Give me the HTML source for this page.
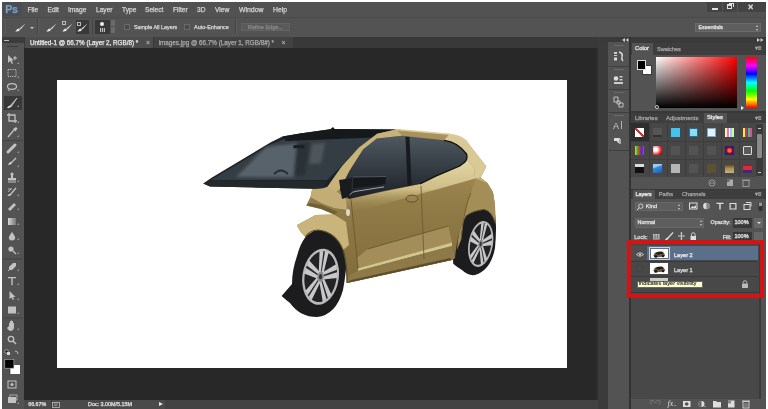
<!DOCTYPE html>
<html><head><meta charset="utf-8">
<style>
*{margin:0;padding:0;box-sizing:border-box}
html,body{width:768px;height:409px;overflow:hidden;background:#fff}
body{position:relative;filter:blur(0.5px);font-family:"Liberation Sans",sans-serif;color:#ddd}
.a{position:absolute}
#app{position:absolute;left:2px;top:2px;width:764px;height:407px;background:#535353}
.t{position:absolute;-webkit-text-stroke:0.25px;white-space:nowrap;line-height:1}
</style></head><body>
<div id="app"></div>
<!-- menu bar -->
<div class="a" style="left:2px;top:2px;width:764px;height:15px;background:#525252"></div>
<!-- options bar -->
<div class="a" style="left:2px;top:16.5px;width:764px;height:20.2px;background:#535353;border-top:1px solid #4a4a4a"></div>
<!-- tab bar -->
<div class="a" style="left:24px;top:37px;width:574px;height:11px;background:#393939"></div>
<div class="a" style="left:25px;top:37px;width:128px;height:11px;background:#4d4d4d"></div>
<div class="a" style="left:154px;top:37px;width:139px;height:11px;background:#424242"></div>
<!-- canvas -->
<div class="a" style="left:24px;top:48px;width:574px;height:352px;background:#282828"></div>
<div class="a" style="left:598px;top:37px;width:10px;height:372px;background:#3b3b3b"></div>
<div class="a" style="left:595px;top:48px;width:3px;height:352px;background:#2c2c2c"></div>
<!-- doc -->
<div class="a" style="left:57px;top:80px;width:510px;height:288px;background:#fff"></div>
<!-- CAR -->
<svg class="a" style="left:190px;top:115px" width="320" height="215" viewBox="190 115 320 215">
<defs>
 <filter id="soft" x="-20%" y="-20%" width="140%" height="140%"><feGaussianBlur stdDeviation="1.6"/></filter>
 <linearGradient id="body" x1="0" y1="0" x2="0" y2="1">
  <stop offset="0" stop-color="#ab955c"/><stop offset="0.5" stop-color="#917b47"/><stop offset="1" stop-color="#806c3c"/>
 </linearGradient>
 <linearGradient id="shoulder" x1="0" y1="0" x2="0" y2="1">
  <stop offset="0" stop-color="#e2d6a6"/><stop offset="0.55" stop-color="#cfbd86"/><stop offset="1" stop-color="#917b47" stop-opacity="0"/>
 </linearGradient>
 <linearGradient id="glass" x1="0" y1="0" x2="0" y2="1">
  <stop offset="0" stop-color="#505960"/><stop offset="0.5" stop-color="#353c43"/><stop offset="1" stop-color="#1d2126"/>
 </linearGradient>
</defs>
<!-- tires + wheel wells -->
<path d="M281.6 296 Q286 300 290 303 Q300 317 317 317 Q336 315 343 290 Q348 262 346 250 Q338 230 318 230 Q303 232 297 256 Q292 270 292 284 Z" fill="#1c1c1e"/>
<path d="M453.2 263.8 Q458 268 462 270 Q468 276 475 275 Q491 270 495 248 Q497 226 495 214 Q486 206 476 209 Q462 214 456 232 L453 258 Z" fill="#1c1c1e"/>
<!-- body base -->
<path d="M396 129.5 L449.4 134.3 Q463 136 468 143 L486.3 166.5 L480.7 177.5 L487.4 183 L492.9 191.9 L495 205 L495.5 224 Q492 211 484 209.5 Q472 211 466 216 Q458 228 455 258 L452 260 L347 283 Q347 262 343 250 Q336 232 318 230 Q308 231 305.4 237.3 L300.3 231.3 L296.8 225.3 L315.6 215 L334 214.5 L321 209 L306.2 205.6 L310.5 197 L312.2 188.5 L324 188 L327.8 186.6 L341.5 167 L359 147.4 L377 133.7 Z" fill="url(#body)"/>
<!-- shoulder highlight -->
<path d="M346 199 L349 199 L420 184 L435.7 176.2 L459.7 166 L467.4 160 L474 167.7 L475.2 178.6 L440 188.5 L420 194 L352 213 L347 210 Z" fill="url(#shoulder)"/>
<!-- rear pillar -->
<path d="M444 140.3 L449.4 134.3 Q463 136 468 143 L486.3 166.5 L480.7 177.5 L475.2 178.6 L474 167.7 L467.4 160 L466.5 154 L456 145.4 Z" fill="#d9c994"/>
<path d="M480.7 177.5 L487.4 183 L492.9 191.9 L495 205 L490 204 L484 188 L475.2 178.6 Z" fill="#c3ae76"/>
<!-- rear fender bulge -->
<path d="M470.8 193 Q464 205 461 240 L457 250 Q458 228 466 216 Q472 211 484 209.5 Q492 211 495.5 224 L495 205 L492.9 191.9 L487.4 183 L475.2 178.6 Z" fill="#a38e58"/>
<path d="M470.8 193 Q464.2 207.3 461 240" stroke="#6f5d34" stroke-width="1" fill="none"/>
<!-- front fender -->
<path d="M296.8 225.3 L315.6 215 L334 214.5 L346 222 L349 245 L343 250 Q336 232 318 230 Q308 231 305.4 237.3 L300.3 231.3 Z" fill="#c9b47c"/>
<path d="M306.2 205.6 L321 209 L334 214.5 L338 212 L322 205 L310 203 Z" fill="#5e4f2c" opacity="0.6"/>
<path d="M312.2 188.5 L324 188 L327.8 186.6 L335 190 L346 199 L347 210 L334 208 L321 203 L310.5 197 Z" fill="#c2ad76"/>
<!-- lower door shading -->
<path d="M367.5 249 L448.3 226 L452 242.5 L358.3 268.2 L357 258 Z" fill="#a38e5a"/>
<path d="M367.5 249 L448.3 226" stroke="#6e5c34" stroke-width="1" fill="none"/>
<path d="M358.3 268.2 L452 242.5 L452 246 L358 271 Z" fill="#d4c48e"/>
<path d="M358 271 L452 246 L455 258 L452 260 L347 283 L350 275 Z" fill="#8e7a48"/>
<path d="M351 280 L450 258 L452 260 L347 283 Z" fill="#5e4d2c"/>
<!-- arch edges -->
<path d="M305.4 237.3 Q308 231 318 230 Q336 232 343 250 Q347 262 347 283" fill="none" stroke="#5a4a28" stroke-width="1.2"/>
<path d="M466 216 Q472 211 484 209.5 Q492 211 495.5 224" fill="none" stroke="#5a4a28" stroke-width="1"/>
<!-- door lines -->
<path d="M351 199.4 Q354 230 358 268" stroke="#6a5830" stroke-width="0.9" fill="none"/>
<path d="M421 186 L424 259" stroke="#6a5830" stroke-width="0.8" fill="none"/>
<!-- roof black + windshield -->
<path d="M203.2 183.5 L212 177.5 L271.3 141.9 L282.5 136.4 L300 133.6 L332 129 L396 129.5 L377 133.7 L359 147.4 L341.5 167 L327.8 186.6 L324 188 L315 188.8 L210 186.5 Z" fill="#1e2327"/>
<path d="M210 180.5 L271.5 144 L284.5 139 L374 137 L357 150 L339.5 168 L327 180 L216 180 Z" fill="#353d44"/>
<g filter="url(#soft)">
<path d="M236 177 L266 147 L298 143 L294 177 Z" fill="#59626a"/>
<path d="M296.8 143 L310 142 L305 176 L293.6 176 Z" fill="#2a3035"/>
<path d="M312 144 L325 143 L321 163 L309 164 Z" fill="#4d565d"/>
</g>
<path d="M293.6 145 L304.7 145 L304 148.3 L293 148.3 Z" fill="#1c2024"/>
<path d="M274 174 q7 -7 14 0" stroke="#262c31" stroke-width="1.8" fill="none"/>
<path d="M203.2 183.5 L212 180.5 L327 181 L324 188 L315 188.8 L210 186.5 Z" fill="#23282d"/>
<path d="M282.5 136.4 L300 133.6 L332 129 L396 129.5 L377 133.7 L374 137.5 L286 141 Z" fill="#15191c"/>
<!-- A pillar highlight -->
<path d="M396 129.5 L402.2 135.7 L376.8 138.6 L363 149.4 L349.4 170.9 L339.6 190 L335 192 L327.8 186.6 L341.5 167 L359 147.4 L377 133.7 Z" fill="#c7b27a"/>
<!-- side glass -->
<path d="M376.8 138.6 L402.2 135.7 L444 140.3 Q458 142 466.5 154 Q468 158 465 162 L459.7 166 L435.7 176.2 L420 184 L384 191 L349 199 L339.6 190 L349.4 170.9 L363 149.4 Z" fill="url(#glass)"/>
<path d="M405.5 136.8 L409.5 137 L411.5 185 L407.5 186 Z" fill="#181b1e"/>
<path d="M353 177 L386 176.5 L385.5 184 L375 186 L353 188 Z" fill="#16191c"/>
<path d="M353 177 L386 176.5" stroke="#5c6368" stroke-width="0.8"/>
<path d="M339 180 L352 178 L351 196 L342 199 Z" fill="#191c1f"/>
<path d="M349.5 195 Q352 191.5 356 191.3 L384 186.9" stroke="#a0a6ac" stroke-width="1" fill="none"/>
<path d="M465 162 L459.7 166 L435.7 176.2 L420 184" stroke="#111" stroke-width="1.3" fill="none"/>
<path d="M444 140.3 Q458 142 466.5 154 Q468 158 465 162" stroke="#111" stroke-width="1.3" fill="none"/>
<!-- roof rail -->
<path d="M396 129.5 L449.4 134.3 Q463 136 468 143" stroke="#dccc98" stroke-width="1.6" fill="none"/>
<path d="M330 129.5 l3 -2.5 l2 2.5z" fill="#111"/>
<!-- handle, indicator -->
<ellipse cx="412" cy="198.6" rx="6" ry="3.5" fill="#9a8450" stroke="#5c4c28" stroke-width="0.9"/>
<ellipse cx="348" cy="212.6" rx="2" ry="3.5" fill="#dcd8c8"/>
<!-- rims -->
<ellipse cx="320.6" cy="276.7" rx="18.2" ry="28.2" transform="rotate(8 320.6 276.7)" fill="#b9b9b9"/>
<ellipse cx="320.6" cy="276.7" rx="16" ry="25.5" transform="rotate(8 320.6 276.7)" fill="#232325"/>
<g transform="translate(320.6 276.7) rotate(8) scale(0.66 1.04)">
 <g id="sp"><path d="M-3.5 -3 L-7 -24.5 L7 -24.5 L3.5 -3 Z" fill="#c8c8c8"/><path d="M-0.7 -5 L-1.2 -24.5 L1.2 -24.5 L0.7 -5 Z" fill="#2a2a2c"/></g>
 <use href="#sp" transform="rotate(72)"/><use href="#sp" transform="rotate(144)"/><use href="#sp" transform="rotate(216)"/><use href="#sp" transform="rotate(288)"/>
 <circle r="5" fill="#8a8a8a"/><circle r="2.5" fill="#333"/>
</g>
<ellipse cx="480.7" cy="244" rx="12.2" ry="23.2" transform="rotate(10 480.7 244)" fill="#b9b9b9"/>
<ellipse cx="480.7" cy="244" rx="10.5" ry="21" transform="rotate(10 480.7 244)" fill="#232325"/>
<g transform="translate(480.7 244) rotate(10) scale(0.44 0.86)">
 <use href="#sp"/><use href="#sp" transform="rotate(72)"/><use href="#sp" transform="rotate(144)"/><use href="#sp" transform="rotate(216)"/><use href="#sp" transform="rotate(288)"/>
 <circle r="5" fill="#8a8a8a"/><circle r="2.5" fill="#333"/>
</g>
</svg>


<!-- left toolbar -->
<div class="a" style="left:2px;top:37px;width:22px;height:372px;background:#535353"></div>
<!-- status bar -->
<div class="a" style="left:24px;top:400px;width:141px;height:9px;background:#4a4a4a"></div>
<div class="a" style="left:165px;top:400px;width:433px;height:9px;background:#424242"></div>
<!-- right icon column -->
<div class="a" style="left:608px;top:37px;width:21px;height:372px;background:#535353"></div>
<div class="a" style="left:629px;top:37px;width:2px;height:372px;background:#333"></div>
<!-- panels -->
<div class="a" style="left:631px;top:37px;width:135px;height:372px;background:#4a4a4a"></div>

<!-- MENU -->
<div class="a" style="left:3px;top:2px;width:19px;height:14px;background:#4a4d52"></div>
<div class="t" style="left:5.3px;top:4.2px;font-size:10.5px;font-weight:bold;color:#7c9fc4;letter-spacing:-0.2px">Ps</div>
<div class="t" style="left:27.5px;top:7px;font-size:6.6px;color:#d4d4d4">File</div>
<div class="t" style="left:47.5px;top:7px;font-size:6.6px;color:#d4d4d4">Edit</div>
<div class="t" style="left:68px;top:7px;font-size:6.6px;color:#d4d4d4">Image</div>
<div class="t" style="left:96px;top:7px;font-size:6.6px;color:#d4d4d4">Layer</div>
<div class="t" style="left:122px;top:7px;font-size:6.6px;color:#d4d4d4">Type</div>
<div class="t" style="left:145px;top:7px;font-size:6.6px;color:#d4d4d4">Select</div>
<div class="t" style="left:173px;top:7px;font-size:6.6px;color:#d4d4d4">Filter</div>
<div class="t" style="left:197px;top:7px;font-size:6.6px;color:#d4d4d4">3D</div>
<div class="t" style="left:215px;top:7px;font-size:6.6px;color:#d4d4d4">View</div>
<div class="t" style="left:239px;top:7px;font-size:6.9px;color:#d4d4d4">Window</div>
<div class="t" style="left:273px;top:7px;font-size:6.8px;color:#d4d4d4">Help</div>
<!-- window buttons -->
<div class="a" style="left:706.6px;top:2px;width:59.4px;height:10px;background:#444"></div>
<div class="a" style="left:722px;top:2px;width:1px;height:10px;background:#555"></div>
<div class="a" style="left:737px;top:2px;width:1px;height:10px;background:#555"></div>
<div class="a" style="left:711.5px;top:8px;width:6px;height:1.7px;background:#e0e0e0"></div>
<div class="a" style="left:727px;top:4px;width:5px;height:5px;border:1px solid #e0e0e0;border-top-width:2px"></div>
<div class="a" style="left:729px;top:3px;width:5px;height:4px;border-top:1px solid #e0e0e0;border-right:1px solid #e0e0e0"></div>
<div class="t" style="left:748px;top:2.5px;font-size:9px;font-weight:bold;color:#e0e0e0">&#215;</div>

<!-- OPTIONS -->
<div class="a" style="left:5px;top:20px;width:1px;height:13px;border-left:1px dotted #666"></div>
<svg class="a" style="left:15px;top:23px" width="11" height="9" viewBox="0 0 11 9"><path d="M10.5 0.5 L4.5 5.5 L5.5 6.5 Z" fill="#e6e6e6"/><path d="M4 5.5 Q2 5.5 1.5 7 Q1 8.2 0 8.5 Q3.5 9 5 7 Z" fill="#e6e6e6"/></svg>
<div class="a" style="left:30px;top:27px;width:0;height:0;border-left:2px solid transparent;border-right:2px solid transparent;border-top:2px solid #ccc"></div>
<div class="a" style="left:37px;top:19px;width:1px;height:15px;background:#444"></div>
<div class="a" style="left:38px;top:19px;width:1px;height:15px;background:#5e5e5e"></div>
<svg class="a" style="left:46px;top:23px" width="11" height="9" viewBox="0 0 11 9"><path d="M10.5 0.5 L4.5 5.5 L5.5 6.5 Z" fill="#e6e6e6"/><path d="M4 5.5 Q2 5.5 1.5 7 Q1 8.2 0 8.5 Q3.5 9 5 7 Z" fill="#e6e6e6"/></svg><svg class="a" style="left:62px;top:23px" width="11" height="9" viewBox="0 0 11 9"><path d="M10.5 0.5 L4.5 5.5 L5.5 6.5 Z" fill="#e6e6e6"/><path d="M4 5.5 Q2 5.5 1.5 7 Q1 8.2 0 8.5 Q3.5 9 5 7 Z" fill="#e6e6e6"/></svg>
<div class="a" style="left:62px;top:21px;width:4px;height:4px;border:1px solid #bbb"></div>
<div class="a" style="left:76px;top:20px;width:13px;height:14px;background:#383838"></div>
<svg class="a" style="left:77px;top:23px" width="11" height="9" viewBox="0 0 11 9"><path d="M10.5 0.5 L4.5 5.5 L5.5 6.5 Z" fill="#e6e6e6"/><path d="M4 5.5 Q2 5.5 1.5 7 Q1 8.2 0 8.5 Q3.5 9 5 7 Z" fill="#e6e6e6"/></svg>
<div class="a" style="left:77px;top:22px;width:4px;height:4px;border:1px solid #bbb"></div>
<div class="a" style="left:92px;top:19px;width:1px;height:15px;background:#444"></div>
<div class="a" style="left:95px;top:20px;width:15px;height:14px;background:#383838"></div>
<div class="a" style="left:100px;top:22px;width:4px;height:4px;border-radius:50%;background:#f0f0f0"></div>
<div class="a" style="left:100px;top:28px;width:5px;height:4px;background:repeating-linear-gradient(90deg,#bbb 0 1px,#555 1px 2px)"></div>
<div class="a" style="left:111px;top:20px;width:4px;height:6px;background:#6a6a6a"></div>
<div class="a" style="left:111px;top:27px;width:4px;height:6px;background:#6a6a6a"></div>
<div class="a" style="left:124px;top:24px;width:6px;height:6px;background:#4a4a4a;border:1px solid #6a6a6a"></div>
<div class="t" style="left:134px;top:24.5px;font-size:5.4px;color:#d8d8d8">Sample All Layers</div>
<div class="a" style="left:184px;top:24px;width:6px;height:6px;background:#4a4a4a;border:1px solid #6a6a6a"></div>
<div class="t" style="left:194px;top:24.5px;font-size:5.5px;color:#d8d8d8">Auto-Enhance</div>
<div class="a" style="left:235px;top:19px;width:1px;height:15px;background:#444"></div>
<div class="a" style="left:236px;top:19px;width:1px;height:15px;background:#5e5e5e"></div>
<div class="a" style="left:241px;top:23px;width:49px;height:8px;background:#5a5a5a;border:1px solid #636363"></div>
<div class="t" style="left:248px;top:24.5px;font-size:5.5px;color:#8a8a8a">Refine Edge...</div>
<div class="a" style="left:695px;top:23px;width:66px;height:9px;background:#5e5e5e;border:1px solid #6a6a6a"></div>
<div class="t" style="left:698.5px;top:25px;font-size:5.4px;color:#e4e4e4">Essentials</div>
<div class="a" style="left:756px;top:25px;width:0;height:0;border-left:1.5px solid transparent;border-right:1.5px solid transparent;border-bottom:2px solid #ccc"></div>
<div class="a" style="left:756px;top:29px;width:0;height:0;border-left:1.5px solid transparent;border-right:1.5px solid transparent;border-top:2px solid #ccc"></div>

<!-- TABS -->
<div class="t" style="left:30px;top:39.5px;font-size:6.3px;color:#e8e8e8">Untitled-1 @ 66.7% (Layer 2, RGB/8) *</div>
<div class="t" style="left:146px;top:39px;font-size:7px;color:#aaa">&#215;</div>
<div class="t" style="left:158.7px;top:39.5px;font-size:6.3px;color:#a8a8a8">images.jpg @ 66.7% (Layer 1, RGB/8#) *</div>
<div class="t" style="left:281.5px;top:39px;font-size:7px;color:#aaa">&#215;</div>
<!-- toolbar header -->
<div class="a" style="left:2px;top:36.7px;width:22px;height:6.8px;background:#3c3c3c"></div>
<div class="a" style="left:4px;top:39.5px;width:5px;height:1.5px;background:#bbb"></div>
<div class="a" style="left:7px;top:46px;width:10.5px;height:1px;background:#3a3a3a"></div>
<!-- TOOLS -->
<svg class="a" style="left:0;top:0" width="26" height="409" viewBox="0 0 26 409"><path d="M8 55 L8 63 L10 61 L12 64 L13 63.5 L11.5 60.5 L14 60.5 Z" fill="#c2c2c2"/><path d="M13 58 h4 M15 56 v4" stroke="#c2c2c2" stroke-width="1"/><rect x="8" y="69.5" width="8" height="7" fill="none" stroke="#c2c2c2" stroke-width="1" stroke-dasharray="1.2 1"/><ellipse cx="12" cy="86.5" rx="4.5" ry="2.8" fill="none" stroke="#c2c2c2" stroke-width="1.2"/><path d="M8.5 88 q-1 2 1 3" stroke="#c2c2c2" fill="none" stroke-width="1"/><rect x="4" y="96" width="18" height="14" fill="#383838"/><path d="M17 98 L10 106 L11 107 Z" fill="#c2c2c2" stroke="#c2c2c2" stroke-width="0.8"/><path d="M10 105.5 q-2 0 -3 2.5 q2.5 0.5 4 -1 z" fill="#d8d8d8"/><path d="M9 113 v8 h8 M7 115 h8 v8" stroke="#c2c2c2" fill="none" stroke-width="1.3"/><path d="M8 137 L14 130" stroke="#c2c2c2" stroke-width="1.3"/><path d="M13 129 l3 -2 l1.5 1.5 l-2 3 z" fill="#c2c2c2"/><rect x="3" y="140" width="20" height="1" fill="#444"/><path d="M8 152 L15 145" stroke="#c2c2c2" stroke-width="3" stroke-linecap="round"/><path d="M16 158 L11 163" stroke="#c2c2c2" stroke-width="1.3"/><path d="M11 162 q-2 0 -3 3 q3 0 4 -2 z" fill="#d8d8d8"/><rect x="11" y="174" width="2" height="4" fill="#c2c2c2"/><circle cx="12" cy="174" r="1.6" fill="#c2c2c2"/><rect x="8" y="178" width="8" height="2.5" fill="#c2c2c2"/><rect x="8" y="181.5" width="8" height="1" fill="#c2c2c2"/><path d="M16 188 L10 195" stroke="#c2c2c2" stroke-width="1.3"/><path d="M8 189 h4 M8 192 l3 -3" stroke="#c2c2c2" stroke-width="0.9"/><path d="M10 194 q-2 0 -2.5 2 q2.5 0 3.5 -1 z" fill="#d8d8d8"/><path d="M8 209 L14 203 L16 205 L10 211 Z" fill="#c2c2c2"/><defs><linearGradient id="gt" x1="0" x2="1"><stop offset="0" stop-color="#d8d8d8"/><stop offset="1" stop-color="#777"/></linearGradient></defs><rect x="8" y="218" width="8" height="7" fill="url(#gt)"/><path d="M12 232 Q8 237 9 239 Q12 242 15 239 Q16 237 12 232 Z" fill="#c2c2c2"/><circle cx="11" cy="249" r="2.6" fill="#c2c2c2"/><path d="M13 251 L16 254" stroke="#c2c2c2" stroke-width="1.3"/><rect x="3" y="258.5" width="20" height="1" fill="#444"/><path d="M16 263 L13 263 L9 267 L9 270 L12 270 L16 266 Z" fill="#c2c2c2"/><path d="M9 270 L8 271" stroke="#c2c2c2"/><path d="M8 277 h8 v1.2 h-3.3 v7 h-1.4 v-7 h-3.3 z" fill="#c2c2c2"/><path d="M9.5 291 L9.5 299 L11.5 297.5 L13 300 L14 299.5 L13 297 L15.5 297 Z" fill="#c2c2c2"/><rect x="8" y="306.5" width="8" height="7" fill="#c2c2c2"/><rect x="3" y="317.5" width="20" height="1" fill="#444"/><path d="M9 326 v-3 h1 v2 v-4 h1 v4 v-4.5 h1 v4.5 v-4 h1 v4 v-2 h1 v4 q0 3 -3 4 h-1 q-2 -1 -3 -3 z" fill="#c2c2c2"/><circle cx="11" cy="339" r="2.7" fill="none" stroke="#c2c2c2" stroke-width="1.3"/><path d="M13 341 L16 344" stroke="#c2c2c2" stroke-width="1.5"/><rect x="5" y="350" width="3" height="3" fill="#111" stroke="#ccc" stroke-width="0.6"/><rect x="7" y="352" width="3" height="3" fill="#d8d8d8"/><path d="M15 351 q3 0 3 3" stroke="#c2c2c2" fill="none" stroke-width="0.9"/><rect x="10" y="364.7" width="10.3" height="9.7" fill="#fff" stroke="#2a2a2a" stroke-width="0.6"/><rect x="4.8" y="359.3" width="9.1" height="8.9" fill="#000" stroke="#bbb" stroke-width="0.6"/><rect x="8" y="381" width="8" height="7" fill="none" stroke="#c2c2c2" stroke-width="1"/><circle cx="12" cy="384.5" r="1.5" fill="#c2c2c2"/><rect x="8" y="397" width="8" height="6" fill="#c2c2c2"/><rect x="10" y="395" width="7" height="5" fill="none" stroke="#c2c2c2" stroke-width="0.8"/><path d="M17 64 l2 0 l0 -2 z" fill="#999"/><path d="M17 78 l2 0 l0 -2 z" fill="#999"/><path d="M17 91 l2 0 l0 -2 z" fill="#999"/><path d="M17 107 l2 0 l0 -2 z" fill="#999"/><path d="M17 123 l2 0 l0 -2 z" fill="#999"/><path d="M17 137 l2 0 l0 -2 z" fill="#999"/><path d="M17 153 l2 0 l0 -2 z" fill="#999"/><path d="M17 167 l2 0 l0 -2 z" fill="#999"/><path d="M17 182 l2 0 l0 -2 z" fill="#999"/><path d="M17 196 l2 0 l0 -2 z" fill="#999"/><path d="M17 210 l2 0 l0 -2 z" fill="#999"/><path d="M17 225 l2 0 l0 -2 z" fill="#999"/><path d="M17 240 l2 0 l0 -2 z" fill="#999"/><path d="M17 254 l2 0 l0 -2 z" fill="#999"/><path d="M17 271 l2 0 l0 -2 z" fill="#999"/><path d="M17 285 l2 0 l0 -2 z" fill="#999"/><path d="M17 300 l2 0 l0 -2 z" fill="#999"/><path d="M17 314 l2 0 l0 -2 z" fill="#999"/><path d="M17 330 l2 0 l0 -2 z" fill="#999"/><path d="M17 404 l2 0 l0 -2 z" fill="#999"/></svg>

<!-- RIGHT ICON COLUMN -->
<div class="a" style="left:599px;top:37px;width:30px;height:5px;background:#3a3a3a"></div>
<svg class="a" style="left:622px;top:38px" width="7" height="4" viewBox="0 0 7 4"><path d="M0 2 L3 0 V4Z M3.5 2 L6.5 0 V4Z" fill="#ccc"/></svg>
<div class="a" style="left:609px;top:44px;width:20px;height:23px;border-bottom:1px solid #3e3e3e"></div>
<div class="a" style="left:614px;top:45px;width:10px;height:1px;background:#6a6a6a"></div>
<div class="a" style="left:609px;top:68px;width:20px;height:22px;border-bottom:1px solid #3e3e3e"></div>
<div class="a" style="left:614px;top:69px;width:10px;height:1px;background:#6a6a6a"></div>
<div class="a" style="left:609px;top:91px;width:20px;height:22px;border-bottom:1px solid #3e3e3e"></div>
<div class="a" style="left:614px;top:92px;width:10px;height:1px;background:#6a6a6a"></div>
<div class="a" style="left:609px;top:114px;width:20px;height:37px;border-bottom:1px solid #3e3e3e"></div>
<div class="a" style="left:614px;top:115px;width:10px;height:1px;background:#6a6a6a"></div>
<svg class="a" style="left:608px;top:44px" width="21" height="110" viewBox="608 44 21 110">
 <rect x="614" y="52" width="3" height="2" fill="#ccc"/><rect x="614" y="55" width="3" height="1" fill="#ccc"/><rect x="614" y="57.5" width="3" height="3" fill="#ddd"/>
 <path d="M619 52 q4 1 3 5 q-1 2 1 4" stroke="#ddd" stroke-width="1.5" fill="none"/>
 <circle cx="616" cy="78.5" r="2.3" fill="#ddd"/><rect x="619.5" y="76" width="3" height="1.5" fill="#ccc"/><rect x="619.5" y="79" width="3" height="1.5" fill="#ccc"/><rect x="614" y="82" width="9" height="2" fill="#ccc"/>
 <path d="M614 97 h4 v5 h-4 z M617 101 h3 v3 h-3 z M619 103 h4 v4 h-4z" fill="none" stroke="#ccc" stroke-width="0.9"/>
 <text x="613" y="129" font-family="Liberation Sans" font-size="9" fill="#ccc">A</text><rect x="621" y="121" width="0.8" height="8" fill="#ccc"/>
 <path d="M614 138 h6 v5 h-2 l-1 -2 h-3 z" fill="#ddd"/><rect x="619" y="139" width="2" height="5" fill="#aaa"/>
</svg>
<!-- PANEL HEADER -->
<div class="a" style="left:631px;top:37px;width:135px;height:6px;background:#3a3a3a"></div>
<svg class="a" style="left:757px;top:38px" width="7" height="4" viewBox="0 0 7 4"><path d="M0 0 L3 2 L0 4Z M3.5 0 L6.5 2 L3.5 4Z" fill="#ccc"/></svg>
<!-- COLOR PANEL -->
<div class="a" style="left:631px;top:43px;width:135px;height:12px;background:#3e3e3e"></div>
<div class="a" style="left:632px;top:43px;width:21px;height:12px;background:#535353"></div>
<div class="a" style="left:631px;top:55px;width:135px;height:56px;background:#535353"></div>
<div class="t" style="left:635px;top:46.3px;font-size:5.9px;color:#f2f2f2">Color</div>
<div class="t" style="left:657px;top:46.5px;font-size:5.5px;color:#a6a6a6">Swatches</div>
<div class="t" style="left:755px;top:45px;font-size:6px;color:#aaa">&#9662;&#8801;</div>
<div class="a" style="left:641.9px;top:65.2px;width:10.5px;height:10px;background:#fff;border:1px solid #3a3a3a"></div>
<div class="a" style="left:637.4px;top:59.7px;width:9px;height:9.9px;background:#000;border:1px solid #ddd"></div>
<div class="a" style="left:656px;top:57px;width:81px;height:51px;background:linear-gradient(to bottom,rgba(0,0,0,0),#000),linear-gradient(to right,#fff,#f00)"></div>
<div class="a" style="left:655px;top:105px;width:4px;height:4px;border:1px solid #ccc;border-radius:50%"></div>
<div class="a" style="left:745.5px;top:57px;width:11px;height:51px;background:linear-gradient(to bottom,#f00 0%,#f0f 17%,#00f 33%,#0ff 50%,#0f0 67%,#ff0 83%,#f00 100%)"></div>
<div class="a" style="left:741px;top:106px;width:0;height:0;border-top:2px solid transparent;border-bottom:2px solid transparent;border-left:3px solid #eee"></div>

<!-- STYLES PANEL -->
<div class="a" style="left:631px;top:111px;width:135px;height:2px;background:#383838"></div>
<div class="a" style="left:631px;top:113px;width:135px;height:10px;background:#3e3e3e"></div>
<div class="a" style="left:703.5px;top:113px;width:23px;height:10px;background:#535353"></div>
<div class="t" style="left:635px;top:115.5px;font-size:5.9px;color:#a6a6a6">Libraries</div>
<div class="t" style="left:666px;top:115.5px;font-size:5.9px;color:#a6a6a6">Adjustments</div>
<div class="t" style="left:707px;top:115.3px;font-size:5.8px;color:#f2f2f2">Styles</div>
<div class="t" style="left:755px;top:114.5px;font-size:6px;color:#aaa">&#9662;&#8801;</div>
<div class="a" style="left:631px;top:123px;width:135px;height:66px;background:#535353"></div>
<div class="a" style="left:631px;top:123px;width:125px;height:54px;background:#474747"></div>
<div class="a" style="left:648.5px;top:123px;width:1px;height:54px;background:#3d3d3d"></div>
<div class="a" style="left:666.5px;top:123px;width:1px;height:54px;background:#3d3d3d"></div>
<div class="a" style="left:684.5px;top:123px;width:1px;height:54px;background:#3d3d3d"></div>
<div class="a" style="left:702.5px;top:123px;width:1px;height:54px;background:#3d3d3d"></div>
<div class="a" style="left:720.5px;top:123px;width:1px;height:54px;background:#3d3d3d"></div>
<div class="a" style="left:738.5px;top:123px;width:1px;height:54px;background:#3d3d3d"></div>
<div class="a" style="left:631px;top:141.3px;width:125px;height:1px;background:#3d3d3d"></div>
<div class="a" style="left:631px;top:159.3px;width:125px;height:1px;background:#3d3d3d"></div>
<div class="a" style="left:631px;top:123.3px;width:17.5px;height:18px;background:#2e2e2e"></div>
<div class="a" style="left:635.0px;top:127.80000000000001px;width:9px;height:9px;background:linear-gradient(45deg,#fff 0 43%,#c33 43% 57%,#fff 57%);"></div>
<div class="a" style="left:653.0px;top:127.80000000000001px;width:9px;height:9px;background:#555;border-bottom:2px solid #333;"></div>
<div class="a" style="left:671.0px;top:127.80000000000001px;width:9px;height:9px;background:#42c4ec;"></div>
<div class="a" style="left:689.0px;top:127.80000000000001px;width:9px;height:9px;background:#8adcf2;border:1px solid #2a6a9a;"></div>
<div class="a" style="left:707.0px;top:127.80000000000001px;width:9px;height:9px;background:#e4f4f8;border:1px solid #7ac;"></div>
<div class="a" style="left:725.0px;top:127.80000000000001px;width:9px;height:9px;background:linear-gradient(90deg,#ff9 0 20%,#f6c 20% 40%,#fff 40% 60%,#9cf 60% 80%,#cf9 80%);"></div>
<div class="a" style="left:743.0px;top:127.80000000000001px;width:9px;height:9px;background:linear-gradient(90deg,#ee4 0 20%,#d33 20% 40%,#44c 40% 60%,#3c6 60% 80%,#e4a 80%);"></div>
<div class="a" style="left:635.0px;top:145.7px;width:9px;height:9px;background:linear-gradient(90deg,#ec3,#3b3,#c33,#33c,#c3c);"></div>
<div class="a" style="left:653.0px;top:145.7px;width:9px;height:9px;background:radial-gradient(circle at 30% 40%,#fff 0 20%,#e33 60%,#600);"></div>
<div class="a" style="left:671.0px;top:145.7px;width:9px;height:9px;background:#535353;"></div>
<div class="a" style="left:689.0px;top:145.7px;width:9px;height:9px;background:#535353;"></div>
<div class="a" style="left:707.0px;top:145.7px;width:9px;height:9px;background:#535353;"></div>
<div class="a" style="left:725.0px;top:145.7px;width:9px;height:9px;background:radial-gradient(circle,#f63 0 25%,#a03 45%,#227 70%);"></div>
<div class="a" style="left:743.0px;top:145.7px;width:9px;height:9px;background:#5a5a5a;border:1.5px solid #ddd;border-radius:1px;"></div>
<div class="a" style="left:635.0px;top:163.6px;width:9px;height:9px;background:linear-gradient(to bottom,#ddd 0 30%,#111 30%);"></div>
<div class="a" style="left:653.0px;top:163.6px;width:9px;height:9px;background:linear-gradient(160deg,#9cf 0 30%,#3a8be0 40%,#1a5ab0);"></div>
<div class="a" style="left:671.0px;top:163.6px;width:9px;height:9px;background:#b5b5b5;"></div>
<div class="a" style="left:689.0px;top:163.6px;width:9px;height:9px;background:#535353;"></div>
<div class="a" style="left:707.0px;top:163.6px;width:9px;height:9px;background:#5b5232;"></div>
<div class="a" style="left:725.0px;top:163.6px;width:9px;height:9px;background:linear-gradient(to bottom,#4e3c1a,#a8905a 50%,#c8b280);"></div>
<div class="a" style="left:743.0px;top:163.6px;width:9px;height:9px;background:linear-gradient(to bottom,#7a2a3a 0 25%,#d03040 25% 70%,#3a2a7a 70%);"></div>

<div class="a" style="left:756px;top:124px;width:7px;height:52px;background:#3a3a3a"></div>
<div class="a" style="left:757px;top:134px;width:5px;height:24px;background:#8a8a8a;border-radius:1px"></div>
<div class="a" style="left:758px;top:128px;width:3px;height:1px;background:#ccc"></div>
<div class="a" style="left:758px;top:172px;width:3px;height:1px;background:#ccc"></div>
<svg class="a" style="left:705px;top:178px" width="50" height="10" viewBox="705 178 50 10">
 <circle cx="712" cy="183" r="3" fill="none" stroke="#999" stroke-width="1"/><path d="M710 183 h4" stroke="#999"/>
 <rect x="727" y="179.5" width="6" height="6.5" fill="#aaa"/><rect x="727" y="179.5" width="2.5" height="2.5" fill="#666"/>
 <rect x="743" y="180.5" width="6" height="6" fill="none" stroke="#999" stroke-width="1"/><rect x="742" y="179.5" width="8" height="1" fill="#999"/>
</svg>
<div class="a" style="left:631px;top:189px;width:135px;height:2px;background:#383838"></div>

<!-- LAYERS PANEL -->
<div class="a" style="left:631px;top:190px;width:135px;height:8.5px;background:#3e3e3e"></div>
<div class="a" style="left:632.8px;top:190px;width:22px;height:8.5px;background:#535353"></div>
<div class="t" style="left:635.5px;top:191.5px;font-size:5.4px;color:#f2f2f2">Layers</div>
<div class="t" style="left:658.8px;top:191.7px;font-size:5.6px;color:#a6a6a6">Paths</div>
<div class="t" style="left:682px;top:191.7px;font-size:5.6px;color:#a6a6a6">Channels</div>
<div class="t" style="left:755px;top:191px;font-size:6px;color:#aaa">&#9662;&#8801;</div>
<div class="a" style="left:631px;top:198.5px;width:135px;height:210.5px;background:#535353"></div>
<!-- filter row -->
<div class="a" style="left:634.8px;top:201.7px;width:48px;height:9.6px;background:#5e5e5e;border:1px solid #676767"></div>
<svg class="a" style="left:636px;top:203px" width="8" height="8" viewBox="0 0 8 8"><circle cx="4.8" cy="3.2" r="2.2" fill="none" stroke="#ddd" stroke-width="0.9"/><path d="M3.2 4.8 L1 7" stroke="#ddd" stroke-width="1"/></svg>
<div class="t" style="left:645.8px;top:203.8px;font-size:5.6px;color:#e6e6e6">Kind</div>
<div class="a" style="left:678px;top:203.5px;width:0;height:0;border-left:1.5px solid transparent;border-right:1.5px solid transparent;border-bottom:2px solid #ccc"></div>
<div class="a" style="left:678px;top:207.5px;width:0;height:0;border-left:1.5px solid transparent;border-right:1.5px solid transparent;border-top:2px solid #ccc"></div>
<svg class="a" style="left:686px;top:200px" width="80" height="14" viewBox="686 200 80 14">
 <rect x="689.5" y="203" width="7.5" height="6" fill="none" stroke="#ddd" stroke-width="1"/><path d="M690.5 208 l2 -2 l1.5 1 l2 -2 v3z" fill="#ddd"/>
 <circle cx="706.3" cy="206" r="3.2" fill="#ddd"/><path d="M706.3 202.8 a3.2 3.2 0 0 1 0 6.4z" fill="#888"/>
 <path d="M716.5 202.8 h7 v1.3 h-2.8 v5.5 h-1.4 v-5.5 h-2.8z" fill="#ddd"/>
 <path d="M729.5 203 h1.2 v6.5 h-1.2z M735.3 203 h1.2 v6.5 h-1.2z M729.5 203 h7 v1 h-7z M729.5 208.5 h7 v1 h-7z" fill="#ddd"/>
 <rect x="744" y="204.5" width="6" height="5" fill="none" stroke="#ddd" stroke-width="1"/><path d="M746 202.5 h5 v4" stroke="#ddd" fill="none" stroke-width="1"/>
 <rect x="758.5" y="202" width="4" height="9" rx="1" fill="#333"/><rect x="759" y="202.5" width="3" height="3.5" fill="#999"/>
</svg>
<!-- blend row -->
<div class="a" style="left:634.8px;top:218px;width:69.5px;height:9.7px;background:#5e5e5e;border:1px solid #676767"></div>
<div class="t" style="left:637.6px;top:220.3px;font-size:5.5px;color:#e6e6e6">Normal</div>
<div class="a" style="left:700px;top:220px;width:0;height:0;border-left:1.5px solid transparent;border-right:1.5px solid transparent;border-bottom:2px solid #ccc"></div>
<div class="a" style="left:700px;top:224px;width:0;height:0;border-left:1.5px solid transparent;border-right:1.5px solid transparent;border-top:2px solid #ccc"></div>
<div class="t" style="left:710.4px;top:220.3px;font-size:5.5px;color:#e0e0e0">Opacity:</div>
<div class="a" style="left:733px;top:218px;width:18.5px;height:9.7px;background:#383838"></div>
<div class="t" style="left:734.5px;top:220.3px;font-size:5.5px;color:#eee">100%</div>
<div class="a" style="left:753.5px;top:218px;width:9.5px;height:9.7px;background:#666"></div>
<div class="a" style="left:756.5px;top:222px;width:0;height:0;border-left:2px solid transparent;border-right:2px solid transparent;border-top:2px solid #ddd"></div>
<!-- lock row -->
<div class="t" style="left:634.2px;top:235.3px;font-size:5.6px;color:#e0e0e0">Lock:</div>
<svg class="a" style="left:650px;top:231px" width="50" height="10" viewBox="650 231 50 10">
 <rect x="653" y="234" width="6.5" height="5.5" fill="#ccc"/><path d="M653 236 h6.5 M653 238 h6.5 M655 234 v5.5 M657.5 234 v5.5" stroke="#666" stroke-width="0.7"/>
 <path d="M673 232.5 L668 238" stroke="#ddd" stroke-width="1.2"/><path d="M668 237.5 q-2 0 -3 2.5 q3 0 3.6 -1.5z" fill="#eee"/>
 <path d="M681.4 232.5 v7 M678 236 h7" stroke="#ccc" stroke-width="1"/><path d="M680 233.5 l1.4 -1.5 l1.4 1.5z M680 238.5 l1.4 1.5 l1.4 -1.5z" fill="#ccc"/>
 <rect x="690.5" y="236" width="5.5" height="4" fill="#ddd"/><path d="M691.5 236 v-1.5 a1.8 1.8 0 0 1 3.6 0 v1.5" stroke="#ddd" fill="none" stroke-width="0.9"/>
</svg>
<div class="t" style="left:722.7px;top:235.3px;font-size:5.6px;color:#e0e0e0">Fill:</div>
<div class="a" style="left:733px;top:232px;width:18.5px;height:9.7px;background:#383838"></div>
<div class="t" style="left:734.5px;top:234.3px;font-size:5.5px;color:#eee">100%</div>
<div class="a" style="left:753.5px;top:232px;width:9.5px;height:9.7px;background:#666"></div>
<!-- layer list -->
<div class="a" style="left:631px;top:244px;width:128px;height:156px;background:#484848"></div>
<div class="a" style="left:759px;top:244px;width:2px;height:156px;background:#3a3a3a"></div>
<div class="a" style="left:647px;top:246.4px;width:110.5px;height:14.1px;background:#5b6f8b"></div>
<div class="a" style="left:631px;top:246.4px;width:16px;height:14.1px;background:#4e4e4e"></div>
<div class="a" style="left:631px;top:260.5px;width:126.5px;height:1px;background:#3a3a3a"></div>
<div class="a" style="left:631px;top:276px;width:126.5px;height:1px;background:#3a3a3a"></div>
<div class="a" style="left:631px;top:291.5px;width:126.5px;height:1px;background:#3a3a3a"></div>
<svg class="a" style="left:636px;top:252px" width="8" height="5" viewBox="0 0 8 5"><path d="M0.5 2.5 Q4 -0.8 7.5 2.5 Q4 5.8 0.5 2.5Z" fill="none" stroke="#d8d8d8" stroke-width="0.9"/><circle cx="4" cy="2.5" r="1" fill="#d8d8d8"/></svg>
<div class="a" style="left:636px;top:265px;width:7px;height:7px;border:1px solid #444"></div>
<div class="a" style="left:648.5px;top:247px;width:21px;height:13px;background:#fff;border:1px solid #c8d4e4;box-shadow:inset 0 0 0 1px #5b6f8b"></div>
<svg class="a" style="left:651px;top:248.5px" width="16" height="10" viewBox="0 0 20 12"><path d="M3 8 Q4 4 8 3.5 L13 3 Q16 3.5 17 6 L17.5 8.5 Q12 10 5 10 Z" fill="#6e6040"/><path d="M5 5.5 L9 3.3 L14 3.1 L15.5 5.8 L9 7 Z" fill="#1e1e1e"/><ellipse cx="6" cy="9" rx="2" ry="1.6" fill="#1a1a1a"/><ellipse cx="15" cy="8.5" rx="1.7" ry="1.5" fill="#1a1a1a"/></svg>
<div class="a" style="left:650.2px;top:263.4px;width:17.7px;height:10.6px;background:#fff"></div>
<svg class="a" style="left:651px;top:264px" width="16" height="10" viewBox="0 0 20 12"><path d="M3 8 Q4 4 8 3.5 L13 3 Q16 3.5 17 6 L17.5 8.5 Q12 10 5 10 Z" fill="#6e6040"/><path d="M5 5.5 L9 3.3 L14 3.1 L15.5 5.8 L9 7 Z" fill="#1e1e1e"/><ellipse cx="6" cy="9" rx="2" ry="1.6" fill="#1a1a1a"/><ellipse cx="15" cy="8.5" rx="1.7" ry="1.5" fill="#1a1a1a"/></svg>
<div class="t" style="left:674px;top:252.8px;font-size:5.6px;color:#f0f0f0">Layer 2</div>
<div class="t" style="left:674px;top:267.6px;font-size:5.6px;color:#e0e0e0">Layer 1</div>
<div class="a" style="left:650.2px;top:278px;width:17.7px;height:3px;background:#ccc"></div>
<svg class="a" style="left:741px;top:280px" width="8" height="8" viewBox="0 0 8 8"><rect x="1" y="3.5" width="6" height="4.5" rx="0.5" fill="#bbb"/><path d="M2.2 3.5 v-1 a1.8 1.8 0 0 1 3.6 0 v1" stroke="#bbb" fill="none" stroke-width="1"/></svg>
<!-- tooltip -->
<div class="a" style="left:636.7px;top:280.5px;width:66.8px;height:7.5px;background:#ffffcc;border:0.5px solid #666"></div>
<div class="t" style="left:638.5px;top:281.2px;font-size:5.7px;color:#222;-webkit-text-stroke:0.1px">Indicates layer visibility</div>
<!-- red highlight -->
<div class="a" style="left:626.5px;top:239.7px;width:137.3px;height:58px;border:4.5px solid #d41414"></div>
<!-- bottom bar -->
<div class="a" style="left:631px;top:399.3px;width:135px;height:9.7px;background:#535353"></div>
<svg class="a" style="left:648px;top:399px" width="105" height="10" viewBox="648 399 105 10">
 <path d="M652 404 a1.8 1.8 0 0 1 0 -3.6 h2 M656.5 400.4 h2 a1.8 1.8 0 0 1 0 3.6" stroke="#777" fill="none" stroke-width="1"/><path d="M653.5 402.2 h3.5" stroke="#777"/>
 <text x="667.5" y="406" font-family="Liberation Serif" font-style="italic" font-size="8" fill="#ddd">fx</text><circle cx="675" cy="405.5" r="0.6" fill="#ddd"/>
 <rect x="683" y="401" width="7.5" height="6" fill="#ddd"/><circle cx="686.7" cy="404" r="1.8" fill="#535353"/>
 <circle cx="701.5" cy="404" r="3" fill="#ddd"/><path d="M701.5 401 a3 3 0 0 0 0 6z" fill="#666"/><circle cx="705" cy="406.5" r="0.6" fill="#ddd"/>
 <path d="M713 401 h3 l1 1 h4 v5.5 h-8z" fill="#ddd"/>
 <rect x="728" y="400.5" width="6.5" height="7" fill="#ddd"/><path d="M728 400.5 h3 v3 h-3z" fill="#888"/>
 <rect x="743" y="401.5" width="6" height="6.5" fill="none" stroke="#ccc" stroke-width="1"/><rect x="742" y="400.5" width="8" height="1" fill="#ccc"/><path d="M745 403 v4 M747 403 v4" stroke="#ccc" stroke-width="0.6"/>
</svg>

<!-- STATUS -->
<div class="t" style="left:28.2px;top:402px;font-size:5.3px;color:#e0e0e0">66.67%</div>
<div class="a" style="left:50.5px;top:400px;width:1px;height:9px;background:#3a3a3a"></div>
<svg class="a" style="left:52px;top:401px" width="9" height="7" viewBox="0 0 9 7"><rect x="0.5" y="1.5" width="7" height="5" fill="none" stroke="#bbb" stroke-width="0.8"/><path d="M2 3 h4 M2 4.5 h3" stroke="#bbb" stroke-width="0.6"/></svg>
<div class="t" style="left:88px;top:402px;font-size:5.4px;color:#e0e0e0">Doc: 3.00M/5.15M</div>
<div class="a" style="left:159px;top:402px;width:0;height:0;border-top:2.5px solid transparent;border-bottom:2.5px solid transparent;border-left:4px solid #e8e8e8"></div>
</body></html>
